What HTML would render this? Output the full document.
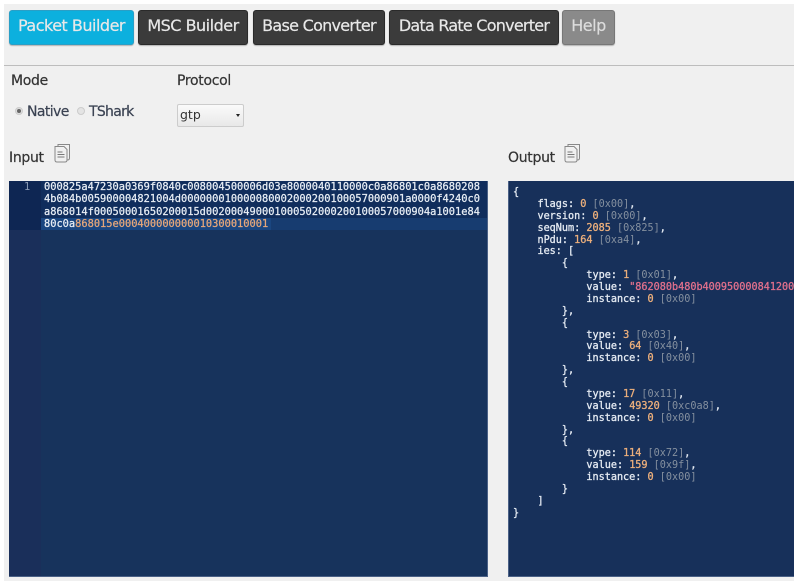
<!DOCTYPE html>
<html><head><meta charset="utf-8"><style>
html,body{margin:0;padding:0;background:#fff}
body{width:800px;height:581px;position:relative;overflow:hidden;font-family:"DejaVu Sans",sans-serif}
#w{position:absolute;left:0;top:0;width:800px;height:581px;overflow:hidden;filter:blur(.35px)}
#bg{position:absolute;left:4px;top:4px;width:790px;height:577px;background:#f0f0f0}
.a{position:absolute;white-space:pre}
.b{position:absolute;top:10px;height:35px;line-height:30px;text-align:center;color:#e8e8e8;font-size:16px;background:#3b3b3b;border:1px solid #2a2a2a;border-radius:3px;box-sizing:border-box;box-shadow:0 1px 1px rgba(0,0,0,.25);letter-spacing:-.5px;-webkit-text-stroke:.2px}
.l{font-size:14px;color:#333;letter-spacing:-.3px;-webkit-text-stroke:.2px}
.code{font-family:"DejaVu Sans Mono",monospace;font-size:10.35px;line-height:12.3px;color:#e8eef5;-webkit-text-stroke:.25px #e8eef5}
.o{font-family:"DejaVu Sans Mono",monospace;font-size:10.17px;line-height:11.88px;color:#e4eaf2;-webkit-text-stroke:.3px}
.n{color:#eeb07c}.g{color:#85909f;-webkit-text-stroke:0}.s{color:#e0708c}
</style></head><body><div id="w">
<div id="bg"></div>
<div class="b" style="left:9px;width:125px;background:#0cb0de;border-color:#2a9fc6">Packet Builder</div>
<div class="b" style="left:138px;width:110px">MSC Builder</div>
<div class="b" style="left:253px;width:132px;letter-spacing:-.72px">Base Converter</div>
<div class="b" style="left:389px;width:170px;letter-spacing:-.76px">Data Rate Converter</div>
<div class="b" style="left:562px;width:53px;background:#8a8a8a;border-color:#777;color:#ddd">Help</div>
<div class="a" style="left:4px;top:65px;width:790px;height:1px;background:#bdbdbd"></div>
<div class="a l" style="left:11px;top:73px">Mode</div>
<div class="a l" style="left:177px;top:73px">Protocol</div>
<div class="a" style="left:15px;top:107px;width:8px;height:8px;border-radius:50%;background:#ddd;border:1px solid #ccc;box-sizing:border-box"></div>
<div class="a" style="left:17px;top:109px;width:4px;height:4px;border-radius:50%;background:#666"></div>
<div class="a l" style="left:27px;top:104px;color:#3a4252;letter-spacing:-.6px">Native</div>
<div class="a" style="left:77px;top:107px;width:8px;height:8px;border-radius:50%;background:#e4e4e4;border:1px solid #ccc;box-sizing:border-box"></div>
<div class="a l" style="left:89px;top:104px;color:#3a4252;letter-spacing:-.7px">TShark</div>
<div class="a" style="left:177px;top:104px;width:67px;height:23px;box-sizing:border-box;border:1px solid #ccc;border-radius:2px;background:linear-gradient(#fafafa,#e8e8e8)"></div>
<div class="a" style="left:180px;top:107px;font-size:12.5px;color:#333">gtp</div>
<div class="a" style="left:236px;top:114px;width:0;height:0;border:2px solid transparent;border-top:3px solid #222"></div>
<div class="a l" style="left:9px;top:150px">Input</div>
<svg class="a" style="left:53px;top:143px" width="18" height="21" viewBox="0 0 18 21" fill="none" stroke="#888" stroke-width="1"><path d="M5 3V1.500h8.500l3 0V15q0 2-2 2"/><path d="M2 3.500h9l3 3V17q0 2-2 2H4q-2 0-2-2z" fill="#f0f0f0"/><path d="M4.500 9h5M4.500 11.500h7M4.500 14h7" stroke="#777"/></svg>
<div class="a l" style="left:508px;top:150px">Output</div>
<svg class="a" style="left:563px;top:143px" width="18" height="21" viewBox="0 0 18 21" fill="none" stroke="#888" stroke-width="1"><path d="M5 3V1.500h8.500l3 0V15q0 2-2 2"/><path d="M2 3.500h9l3 3V17q0 2-2 2H4q-2 0-2-2z" fill="#f0f0f0"/><path d="M4.500 9h5M4.500 11.500h7M4.500 14h7" stroke="#777"/></svg>
<div class="a" style="left:9px;top:181px;width:479px;height:396px;background:#17335c"></div>
<div class="a" style="left:9px;top:181px;width:32px;height:396px;background:#1a2f5a"></div>
<div class="a" style="left:9px;top:181px;width:32px;height:49px;background:#0e2653"></div>
<div class="a" style="left:41px;top:181px;width:447px;height:37px;background:#102d5c"></div>
<div class="a" style="left:41px;top:218px;width:447px;height:12px;background:#173c70"></div>
<div class="a" style="left:41px;top:218px;width:230px;height:12px;background:#1a4680"></div>
<div class="a" style="left:9px;top:181px;width:479px;height:396px;box-shadow:inset 0 -1px 0 #4b6186,inset -1px 0 0 #4b6186"></div>
<div class="a code" style="left:24px;top:181px;color:#8a9ab5;-webkit-text-stroke:0">1</div>
<div class="a code" style="left:44px;top:181px">000825a47230a0369f0840c008004500006d03e8000040110000c0a86801c0a8680208
4b084b005900004821004d000000010000080002000200100057000901a0000f4240c0
a868014f00050001650200015d002000490001000502000200100057000904a1001e84
80c0a<span style="color:#e8a87a;-webkit-text-stroke:.25px #e8a87a">868015e000400000000010300010001</span></div>
<div class="a" style="left:508px;top:181px;width:286px;height:396px;overflow:hidden;background:#17305a;box-shadow:inset 1px 0 0 #4b6186,inset 0 -1px 0 #4b6186"><div class="a o" style="left:5px;top:6px">{
    flags: <span class="n">0</span> <span class="g">[0x00]</span>,
    version: <span class="n">0</span> <span class="g">[0x00]</span>,
    seqNum: <span class="n">2085</span> <span class="g">[0x825]</span>,
    nPdu: <span class="n">164</span> <span class="g">[0xa4]</span>,
    ies: [
        {
            type: <span class="n">1</span> <span class="g">[0x01]</span>,
            value: <span class="s">"862080b480b400950000841200</span>
            instance: <span class="n">0</span> <span class="g">[0x00]</span>
        },
        {
            type: <span class="n">3</span> <span class="g">[0x03]</span>,
            value: <span class="n">64</span> <span class="g">[0x40]</span>,
            instance: <span class="n">0</span> <span class="g">[0x00]</span>
        },
        {
            type: <span class="n">17</span> <span class="g">[0x11]</span>,
            value: <span class="n">49320</span> <span class="g">[0xc0a8]</span>,
            instance: <span class="n">0</span> <span class="g">[0x00]</span>
        },
        {
            type: <span class="n">114</span> <span class="g">[0x72]</span>,
            value: <span class="n">159</span> <span class="g">[0x9f]</span>,
            instance: <span class="n">0</span> <span class="g">[0x00]</span>
        }
    ]
}</div></div>
</div></body></html>
